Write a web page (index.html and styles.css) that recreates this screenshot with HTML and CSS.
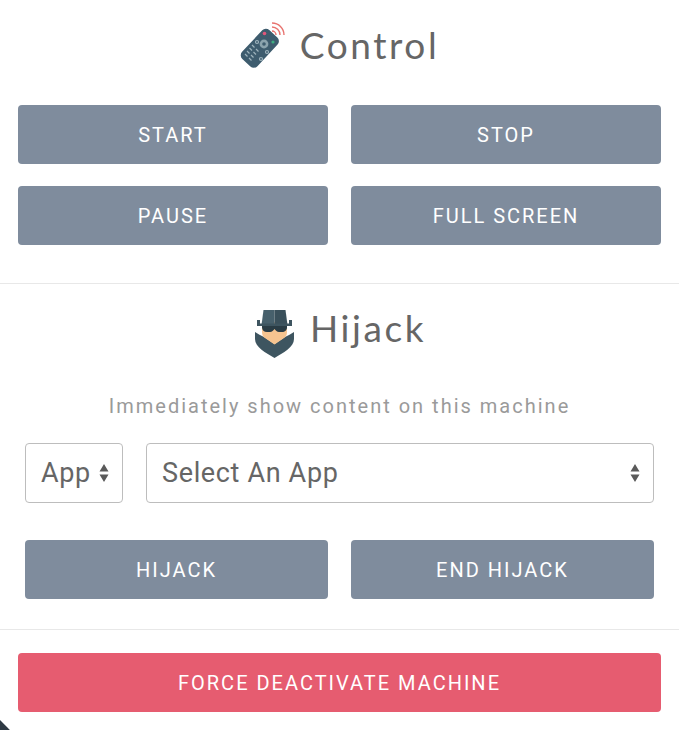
FILE: index.html
```html
<!DOCTYPE html>
<html lang="en">
<head>
<meta charset="utf-8">
<title>Machine Control</title>
<link rel="stylesheet" href="styles.css">
</head>
<body>
<main class="panel">
  <section class="control">
    <h2 class="heading">
      <svg class="icon-remote" viewBox="240 22 46 46" aria-hidden="true">
        <g fill="none" stroke="#e8736f" stroke-width="1.400">
          <path d="M272 31a4 4 0 0 1 4 4"/>
          <path d="M272 27a8 8 0 0 1 8 8"/>
          <path d="M272 23a12 12 0 0 1 12 12"/>
        </g>
        <rect x="240" y="37.500" width="39.500" height="21" rx="5" transform="rotate(-47 260 48)" fill="#3e5c6e"/>
        <circle cx="264.500" cy="33.500" r="1.800" fill="#e0567b"/>
        <circle cx="273" cy="42" r="1.600" fill="#3fae82"/>
        <circle cx="264" cy="44" r="4.400" fill="#8ba3ad"/>
        <circle cx="264" cy="44" r="1.800" fill="#3e5c6e"/>
        <g fill="none" stroke="#9fb4bd" stroke-width="1.200">
          <circle cx="257" cy="42" r="1.500"/>
          <circle cx="267" cy="52" r="1.500"/>
          <circle cx="261" cy="59" r="1.500"/>
          <path d="M252 45l2.500 2.500M249.500 48l2.500 2.500M247 51l2.500 2.500M245 54l2.500 2.500M256 49l2.500 2.500M253.500 52l2.500 2.500M251 55l2.500 2.500M249 58l2.500 2.500"/>
        </g>
      </svg>
      <span class="heading-text">Control</span>
    </h2>
    <div class="btn-grid">
      <button class="btn" type="button">START</button>
      <button class="btn" type="button">STOP</button>
      <button class="btn" type="button">PAUSE</button>
      <button class="btn" type="button">FULL SCREEN</button>
    </div>
  </section>
  <section class="hijack">
    <h2 class="heading">
      <svg class="icon-spy" viewBox="255 308 39 50" aria-hidden="true">
        <path d="M255 332c3 2 6 3.500 9 5l10.500 7 10.500-7c3-1.500 6-3 9-5v7c0 8-11 14-19.500 19-8.500-5-19.500-11-19.500-19z" fill="#3e5560"/>
        <path d="M262 322h25v10c0 3-1 5-3 6l-9.500 6.500-9.500-6.500c-2-1-3-3-3-6z" fill="#f6c490"/>
        <path d="M263.500 310h11v15h-13z" fill="#47606c"/>
        <path d="M274.500 310h11l2 15h-13z" fill="#3a505b"/>
        <path d="M257 320h3v3.500h29v-3.500h3v6h-35z" fill="#3e5560"/>
        <path d="M262 326h25v1.500c0 2.500-2 4.500-5 4.500h-3c-2 0-3.500-1.500-4.500-3-1 1.500-2.500 3-4.500 3h-3c-3 0-5-2-5-4.500z" fill="#2a3c45"/>
      </svg>
      <span class="heading-text">Hijack</span>
    </h2>
    <p class="hint">Immediately show content on this machine</p>
    <div class="select-row">
      <div class="select-wrap select-type">
        <select class="select"><option>App</option></select>
        <svg class="arrows" viewBox="0 0 10 18" aria-hidden="true"><path d="M5 0l4.500 7.500h-9zM5 18L.5 10.500h9z"/></svg>
      </div>
      <div class="select-wrap select-app">
        <select class="select"><option>Select An App</option></select>
        <svg class="arrows" viewBox="0 0 10 18" aria-hidden="true"><path d="M5 0l4.500 7.500h-9zM5 18L.5 10.500h9z"/></svg>
      </div>
    </div>
    <div class="hijack-actions">
      <button class="btn" type="button">HIJACK</button>
      <button class="btn" type="button">END HIJACK</button>
    </div>
  </section>
  <section class="danger">
    <button class="btn btn-danger" type="button">FORCE DEACTIVATE MACHINE</button>
  </section>
</main>
<div class="corner"></div>
</body>
</html>
```

FILE: styles.css
```css
* { box-sizing: border-box; }
html, body { height: 100%; }
body {
  margin: 0;
  background: #fff;
  font-family: Roboto, "Liberation Sans", sans-serif;
  overflow: hidden;
  position: relative;
}
.panel { width: 679px; }
.control {
  padding: 20px 18px 38px;
  border-bottom: 1px solid #e8e8e8;
}
.heading {
  margin: 0;
  display: flex;
  align-items: center;
  justify-content: center;
  gap: 14px;
  height: 50px;
  font-family: Lato, "Open Sans", sans-serif;
  font-weight: 400;
  font-size: 37px;
  letter-spacing: 2.6px;
  color: #666;
}
.heading-text { margin-bottom: 2px; }
.icon-remote { width: 46px; height: 46px; }
.icon-spy { width: 39px; height: 50px; margin: 10px 2px 0 2px; }
.btn-grid {
  display: grid;
  grid-template-columns: 310px 310px;
  grid-auto-rows: 59px;
  column-gap: 23px;
  row-gap: 22px;
  margin-top: 35px;
}
.btn {
  border: 0;
  border-radius: 4px;
  background: #7f8c9d;
  color: #fff;
  font-family: Roboto, "Liberation Sans", sans-serif;
  font-size: 20px;
  font-weight: 400;
  letter-spacing: 2px;
  padding: 0;
}
.hijack {
  padding: 19px 25px 30px;
  border-bottom: 1px solid #e8e8e8;
}
.hint {
  margin: 39px 0 0;
  text-align: center;
  font-size: 20px;
  line-height: 28px;
  letter-spacing: 2px;
  color: #9a9a9a;
}
.select-row {
  display: flex;
  gap: 23px;
  margin-top: 23px;
}
.select-wrap { position: relative; height: 60px; }
.select-type { width: 98px; }
.select-app { flex: 1; }
.select {
  appearance: none;
  width: 100%;
  height: 100%;
  border: 1px solid #bdbdbd;
  border-radius: 4px;
  background: #fff;
  color: #666;
  font-family: Roboto, "Liberation Sans", sans-serif;
  font-size: 27px;
  letter-spacing: .65px;
  padding: 0 15px;
}
.arrows {
  position: absolute;
  right: 14px;
  top: 21px;
  width: 10px;
  height: 18px;
  fill: #5a5a5a;
}
.hijack-actions {
  display: grid;
  grid-template-columns: 303px 303px;
  column-gap: 23px;
  grid-auto-rows: 59px;
  margin-top: 37px;
}
.danger { padding: 23px 18px 0; }
.btn-danger {
  display: block;
  width: 100%;
  height: 59px;
  background: #e65c70;
}
.corner {
  position: absolute;
  left: -7px;
  bottom: -7px;
  width: 14px;
  height: 14px;
  background: #2f3a44;
  transform: rotate(45deg);
}
```
